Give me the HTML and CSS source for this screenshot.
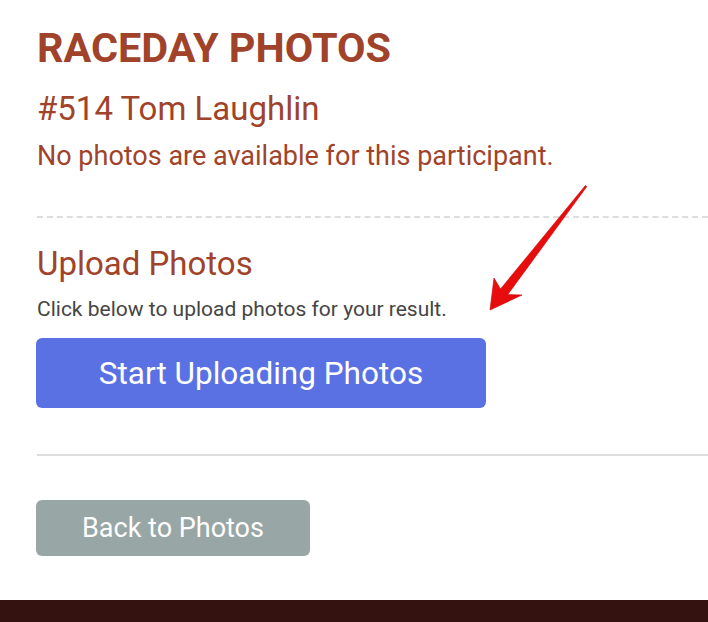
FILE: index.html
```html
<!DOCTYPE html>
<html lang="en">
<head>
<meta charset="utf-8">
<title>Raceday Photos</title>
<link rel="stylesheet" href="styles.css">
</head>
<body>
<div class="page">
  <main class="content">
    <h1 class="title">RACEDAY PHOTOS</h1>
    <h2 class="participant">#514 Tom Laughlin</h2>
    <p class="notice">No photos are available for this participant.</p>
    <hr class="dashed">
    <h3 class="section-title">Upload Photos</h3>
    <p class="hint">Click below to upload photos for your result.</p>
    <a class="btn btn-primary" href="#">Start Uploading Photos</a>
    <hr class="solid">
    <a class="btn btn-secondary" href="#">Back to Photos</a>
  </main>
  <footer class="footer"></footer>
  <svg class="annotation" viewBox="0 0 708 622" width="708" height="622" aria-hidden="true">
    <defs>
      <linearGradient id="arrowFill" x1="0" y1="0" x2="1" y2="1">
        <stop offset="0" stop-color="#ff1a1a"/>
        <stop offset="1" stop-color="#d00000"/>
      </linearGradient>
    </defs>
    <polygon points="585.4,185.5 500.5,289 494,278 490,310 522,295 507.7,294.6 586.8,186.6" fill="url(#arrowFill)" stroke="#c80000" stroke-width="0.6" stroke-linejoin="round"/>
  </svg>
</div>
</body>
</html>
```

FILE: styles.css
```css
html, body {
  margin: 0;
  padding: 0;
  background: #ffffff;
}

body {
  font-family: Roboto, "Liberation Sans", Arial, sans-serif;
  overflow: hidden;
}

.page {
  position: relative;
  min-height: 622px;
}

.content {
  padding: 23px 0 0 37px;
  display: flex;
  flex-direction: column;
  align-items: flex-start;
}

.title {
  margin: 0;
  font-size: 41.4px;
  line-height: 50px;
  font-weight: 700;
  color: #a0432a;
}

.participant {
  margin: 17px 0 0;
  font-size: 33px;
  line-height: 38px;
  font-weight: 400;
  color: #a0432a;
}

.notice {
  margin: 12px 0 0;
  font-size: 27px;
  line-height: 32px;
  color: #a0432a;
}

.dashed {
  align-self: stretch;
  margin: 44px 0 0;
  border: 0;
  border-top: 2px dashed #dddddd;
  height: 0;
}

.section-title {
  margin: 27px 0 0;
  font-size: 33px;
  line-height: 38px;
  font-weight: 400;
  color: #a0432a;
}

.hint {
  margin: 14px 0 0;
  font-size: 21px;
  line-height: 24px;
  color: #454545;
}

.btn {
  display: flex;
  align-items: center;
  justify-content: center;
  color: #ffffff;
  text-decoration: none;
  border-radius: 6px;
  margin-left: -1px;
}

.btn-primary {
  margin-top: 17px;
  width: 450px;
  height: 70px;
  font-size: 31.5px;
  background: #5a71e4;
}

.solid {
  align-self: stretch;
  margin: 46px 0 0;
  border: 0;
  border-top: 2px solid #dddddd;
  height: 0;
}

.btn-secondary {
  margin-top: 44px;
  width: 274px;
  height: 56px;
  font-size: 27px;
  background: #98a6a6;
}

.footer {
  margin-top: 44px;
  height: 60px;
  background: #341210;
}

.annotation {
  position: absolute;
  left: 0;
  top: 0;
  pointer-events: none;
}
```
